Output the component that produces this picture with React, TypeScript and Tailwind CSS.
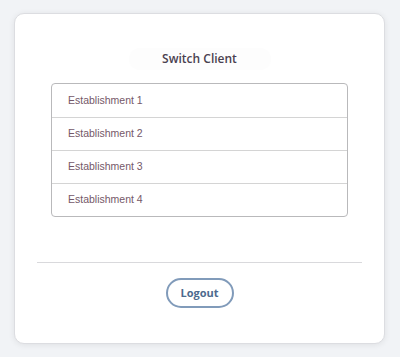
import React from 'react';

const establishments = ['Establishment 1', 'Establishment 2', 'Establishment 3', 'Establishment 4'];

export default function App() {
  return (
    <div className="min-h-[357px] w-[400px] bg-[#f1f3f6] pt-[13px] pl-[14px]">
      <div className="w-[371px] h-[331px] bg-white rounded-[10px] border border-[#dcdde1] shadow-[0_1px_6px_rgba(0,0,0,0.08)] px-[22px] pt-[34px]">
        <div className="flex justify-center">
          <div className="w-[142px] h-[22px] rounded-full bg-[#fdfdfd] flex items-center justify-center text-[12px] font-semibold text-[#4a4150] font-['Open_Sans',sans-serif]">
            Switch Client
          </div>
        </div>

        <ul className="mx-[14px] mt-[13px] border border-[#b9b9bb] rounded-[4px] font-['Liberation_Sans',Arial,sans-serif]">
          {establishments.map((name, i) => (
            <li
              key={name}
              className={`h-[33px] flex items-center pl-[16px] text-[10.5px] text-[#745868] ${i > 0 ? 'border-t border-[#d4d4d4]' : ''}`}
            >
              {name}
            </li>
          ))}
        </ul>

        <div className="mt-[45px] border-t border-[#d9d9dc]" />

        <div className="flex justify-center mt-[15px]">
          <button className="w-[68px] h-[30px] rounded-full border-2 border-[#819bba] text-[11px] font-bold text-[#4d6a8e] font-['Open_Sans',sans-serif]">
            Logout
          </button>
        </div>
      </div>
    </div>
  );
}
